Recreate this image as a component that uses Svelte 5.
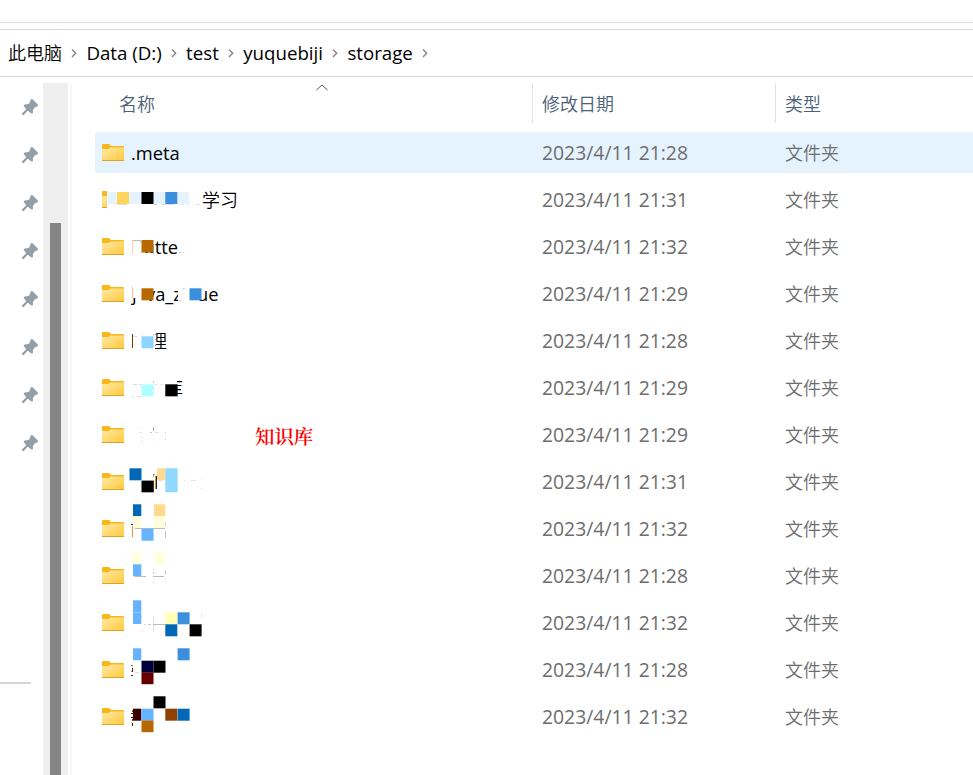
<script lang="ts">
  type Tile = [x: number, y: number, w: number, h: number, color: string];
  type Fragment = { x: number; text: string; cjk?: boolean };

  interface Row {
    label?: string;
    indent?: number;
    date: string;
    note?: string;
    fragments?: Fragment[];
    tiles?: Tile[];
  }

  const crumbs = ['Data (D:)', 'test', 'yuquebiji', 'storage'];
  const pins = Array.from({ length: 8 }, (_, i) => i);

  const sky = '#66b3ff';
  const blue = '#3c8fdd';
  const deep = '#0068b7';
  const cream = '#ffffdc';
  const peach = '#ffd98c';
  const faint = '#c5c9cd';

  // tiles are [x, y, width, height, color], measured from the row's top left corner
  const rows: Row[] = [
    { label: '.meta', date: '2023/4/11 21:28' },
    {
      label: '学习',
      indent: 107,
      date: '2023/4/11 21:31',
      tiles: [
        [12, 10, 19, 22, '#fff'],
        [12, 13, 82, 12, '#e5f3ff'],
        [22, 13, 12, 12, '#ffd45c'],
        [46.5, 13, 12, 12, '#000'],
        [70.3, 13, 12, 12, blue],
        [22, 25, 10, 1, '#ddd'],
        [59, 25, 3, 1, faint],
        [66, 25, 12, 1, '#ddd'],
        [86, 25, 2, 1, '#ddd'],
        [93, 25, 1, 1, '#ddd'],
        [101, 25, 3, 1, '#ddd']
      ]
    },
    {
      date: '2023/4/11 21:32',
      fragments: [{ x: 48.5, text: 'utte' }],
      tiles: [
        [83.5, 12, 6, 17, '#fff'],
        [37, 14, 1, 14, '#ffd4a0'],
        [38, 14, 8, 1, '#bbb'],
        [46.5, 14, 12, 12.5, '#b86800'],
        [46, 27, 12, 3, '#fff'],
        [45, 14, 1, 3, faint],
        [45, 26, 1, 1, faint],
        [84, 26, 2, 1, faint],
        [88, 26, 1, 1, faint]
      ]
    },
    {
      date: '2023/4/11 21:29',
      fragments: [
        { x: 37, text: 'j' },
        { x: 51, text: 'va_z' },
        { x: 102, text: 'ue' }
      ],
      tiles: [
        [36, 12, 6, 13, '#fff'],
        [37, 14, 1, 11, '#f4c08c'],
        [46.5, 15.3, 12, 12, '#b86800'],
        [83, 15, 10, 15, '#fff'],
        [88, 15, 2, 1, faint],
        [84, 27, 2, 1, faint],
        [94.5, 15.3, 12, 12, blue],
        [94, 28, 12, 5, '#fff']
      ]
    },
    {
      date: '2023/4/11 21:28',
      fragments: [{ x: 54, text: '理', cjk: true }],
      tiles: [
        [53, 12, 7, 20, '#fff'],
        [37, 14, 1, 14, '#7a3500'],
        [38, 16, 4, 1, '#ddd'],
        [46.5, 14, 1, 1, faint],
        [58, 14, 1, 2, faint],
        [46.5, 16.3, 12, 12, '#8dd5ff']
      ]
    },
    {
      date: '2023/4/11 21:29',
      fragments: [{ x: 70, text: '库', cjk: true }],
      tiles: [
        [69, 12, 13, 19, '#fff'],
        [38, 17, 4, 1, '#ddd'],
        [44, 17, 3, 1, '#ddd'],
        [60, 17, 2, 1, '#ddd'],
        [66, 17, 2, 1, '#ddd'],
        [37, 29, 2, 1, '#ddd'],
        [42, 29, 4, 1, '#ddd'],
        [58, 14, 1, 2, faint],
        [58, 20, 1, 2, faint],
        [46.5, 17.3, 12, 12, '#b0ffff'],
        [70.3, 17.3, 12.3, 12, '#000']
      ]
    },
    {
      date: '2023/4/11 21:29',
      note: '知识库',
      tiles: [
        [44, 18, 3, 1, '#ddd'],
        [46, 14, 1, 1, '#ddd'],
        [55, 18, 2, 1, faint],
        [58, 13, 1, 4, '#a5adcf'],
        [60, 18, 3, 1, '#ddd'],
        [46, 23, 1, 1, '#ddd'],
        [46, 27, 1, 2, '#c8eee5'],
        [58, 20, 1, 10, '#effcff'],
        [70, 18, 1, 2, '#ddd'],
        [70, 25, 1, 1, '#ddd']
      ]
    },
    {
      date: '2023/4/11 21:31',
      tiles: [
        [34.5, 7.3, 12, 12, deep],
        [46.5, 19.6, 12.3, 11.7, '#000'],
        [62, 7.3, 8.3, 12, peach],
        [70.3, 7.3, 12.3, 24, '#90d8ff'],
        [58, 13, 2, 1, '#888'],
        [58, 14, 1, 2, '#99a'],
        [60, 15, 1, 13, '#e09030'],
        [61, 15, 1, 13, '#10254a'],
        [64, 19, 3, 1, '#ddd'],
        [89, 19, 1, 1, '#ddd'],
        [96, 19, 2, 1, '#ddd'],
        [99, 19, 2, 1, '#ddd'],
        [106, 17, 1, 1, '#ddd'],
        [106, 27, 1, 1, '#ddd']
      ]
    },
    {
      date: '2023/4/11 21:32',
      tiles: [
        [38, -3.7, 8.3, 12, deep],
        [38, 8.3, 8.3, 12, cream],
        [59, -3.7, 11.3, 12, peach],
        [59, 8.3, 11.3, 12, cream],
        [36, 16, 2, 1, '#222'],
        [37, 18, 1, 11, '#e09648'],
        [40, 20, 30, 1, '#bbb'],
        [46.5, 20.7, 12, 12, sky],
        [58, 25, 1, 4, faint],
        [70, 14, 1, 5, '#ddd5ee'],
        [70, 23, 1, 7, '#c5b8d8']
      ]
    },
    {
      date: '2023/4/11 21:28',
      tiles: [
        [38, -2.7, 8.3, 12, cream],
        [58.7, -2.7, 11.6, 12, cream],
        [38, 9.3, 8.3, 12, sky],
        [40, 21, 11, 1, '#bbb'],
        [58, 21, 11, 1, '#bbb'],
        [58, 14, 1, 1, faint],
        [58, 17, 1, 2, faint],
        [46, 27, 1, 1, faint],
        [58, 27, 1, 1, faint],
        [70, 16, 1, 3, '#c5b8d8'],
        [70, 24, 1, 4, '#d9f1ff']
      ]
    },
    {
      date: '2023/4/11 21:32',
      tiles: [
        [38, -1.7, 8.3, 11.7, sky],
        [38, 10.3, 8.3, 11.7, sky],
        [58, 14, 1, 16, '#cfe4fb'],
        [49, 22, 2, 1, '#ddd'],
        [53, 22, 3, 1, faint],
        [58, 22, 12, 1, '#bbb'],
        [46, 14, 1, 1, faint],
        [46, 28, 1, 1, faint],
        [70.3, 10.3, 12, 12, '#ffffb8'],
        [82.6, 10.3, 12, 12, blue],
        [70.3, 22.3, 12, 12, deep],
        [94.6, 22.3, 12, 12, '#000'],
        [106, 11, 1, 5, '#e6e6e6']
      ]
    },
    {
      date: '2023/4/11 21:28',
      tiles: [
        [38, -0.7, 8.3, 12, sky],
        [82.6, -0.7, 12, 12, blue],
        [46.5, 11.7, 12, 12, '#00003a'],
        [58.5, 11.7, 12, 12, '#000'],
        [46.5, 23.5, 12, 11.7, '#660000'],
        [36, 16, 2, 1, '#a06020'],
        [37, 19, 1, 4, '#5a2000'],
        [36, 22, 1, 1, '#d09030'],
        [36, 26, 2, 1, '#40200a'],
        [40, 23, 4, 1, '#ddd']
      ]
    },
    {
      date: '2023/4/11 21:32',
      tiles: [
        [58.5, 0.3, 12, 12, '#000'],
        [38, 12.7, 8.3, 12, '#3a0000'],
        [46.5, 12.7, 12, 12, sky],
        [70.3, 12.7, 12, 12, '#904000'],
        [82.6, 12.7, 12, 12, deep],
        [46.5, 24.5, 12, 11.7, '#b86800'],
        [37, 14, 1, 2, '#a06020'],
        [36, 17, 2, 1, '#402000'],
        [36, 21, 2, 1, '#000'],
        [37, 23, 1, 2, '#703500'],
        [36, 26, 1, 1, '#e0a030'],
        [37, 27, 1, 3, '#40200a']
      ]
    }
  ];
</script>

{#snippet chevron()}
  <svg class="chevron" width="6" height="10" viewBox="0 0 6 10">
    <path d="M1 1.500 4.700 5.200 1 8.900" fill="none" stroke="#858585" stroke-width="1.4" />
  </svg>
{/snippet}

<div class="explorer">
  <div class="toolbar"></div>
  <nav class="address">
    <span class="cjk">此电脑</span>
    {#each crumbs as crumb}
      {@render chevron()}
      <span>{crumb}</span>
    {/each}
    {@render chevron()}
  </nav>

  <div class="body">
    <aside class="quick">
      {#each pins as pin (pin)}
        <div class="pin">
          <svg width="16" height="16" viewBox="0 0 16 16">
            <path
              d="M8.800.2h1.700l5.300 5.200v1.700l-3 1.500-1.500 1.600-.5 4-1.200.6-3.300-2.900-.9.200-3.600 3.800H.1v-1.700l3.700-3.500.1-1-2.300-2.700.5-1.300 4.300-.6 1.200-1.400z"
              fill="#94a0a7"
            />
          </svg>
        </div>
      {/each}
      <div class="divider"></div>
    </aside>
    <div class="track"><div class="thumb"></div></div>
    <div class="splitter"></div>

    <main>
      <div class="grid head">
        <div class="name-head">
          名称
          <svg class="sort" width="12" height="7" viewBox="0 0 12 7">
            <path d="M.5 6 6 1l5.500 5" fill="none" stroke="#555" />
          </svg>
        </div>
        <div class="cell">修改日期</div>
        <div class="cell">类型</div>
      </div>

      {#each rows as row, i}
        <div class="grid row" class:selected={i === 0}>
          <div class="name">
            <svg class="folder" width="22" height="18" viewBox="0 0 22 18">
              <path d="M0 1Q0 0 1 0h5.500q1 0 1.500.7L9 2h12q1 0 1 1v4H0z" fill="#f8b719" />
              <path d="M0 5h6.500l2-1.500H22V16q0 1-1 1H1q-1 0-1-1z" fill="url(#folder-face)" />
              <path d="M0 16.500h22" stroke="#dca22b" />
            </svg>
            {#if row.label}
              <span class="label" class:cjk={row.indent} style:margin-left="{(row.indent ?? 36) - 29}px">
                {row.label}
              </span>
            {/if}
            {#if row.note}
              <span class="note">{row.note}</span>
            {/if}
            {#if row.tiles}
              <svg class="mosaic" width="240" height="41">
                {#each row.fragments ?? [] as part}
                  <text x={part.x} y="28" class:cjk={part.cjk}>{part.text}</text>
                {/each}
                {#each row.tiles as [x, y, w, h, color]}
                  <rect {x} {y} width={w} height={h} fill={color} />
                {/each}
              </svg>
            {/if}
          </div>
          <div class="date">{row.date}</div>
          <div class="type">文件夹</div>
        </div>
      {/each}
    </main>
  </div>

  <svg class="defs" width="0" height="0">
    <linearGradient id="folder-face" x1="0" y1="0" x2="1" y2="1">
      <stop offset="0" stop-color="#ffe9a9" />
      <stop offset="1" stop-color="#ffc938" />
    </linearGradient>
  </svg>
</div>

<style>
  :global(body) {
    margin: 0;
    background: #fff;
  }

  .explorer {
    width: 973px;
    height: 775px;
    overflow: hidden;
    position: relative;
    display: flex;
    flex-direction: column;
    font-family: 'Open Sans', 'Noto Sans CJK SC', sans-serif;
    font-size: 18.3px;
    color: #000;
    white-space: nowrap;
  }

  .cjk {
    font-family: 'Noto Sans CJK SC', sans-serif;
    font-size: 18px;
    font-weight: 350;
  }

  .toolbar {
    box-sizing: border-box;
    height: 23px;
    flex: none;
    border-bottom: 1px solid #d6dee2;
  }

  .address {
    box-sizing: border-box;
    height: 48px;
    flex: none;
    margin-top: 6px;
    padding: 0 0 2px 8px;
    display: flex;
    align-items: center;
    gap: 9.2px;
    border-top: 1px solid #d6dadb;
    border-bottom: 1px solid #d6dadb;
    font-size: 18.7px;
  }

  .chevron {
    flex: none;
    margin-top: 1px;
  }

  .body {
    flex: 1;
    min-height: 0;
    padding-top: 6px;
    display: flex;
  }

  .quick {
    width: 43px;
    flex: none;
  }

  .pin {
    height: 48px;
    display: flex;
    align-items: center;
    justify-content: flex-end;
    padding-right: 5px;
    box-sizing: border-box;
  }

  .divider {
    width: 31px;
    height: 2px;
    margin-top: 215px;
    background: #d5d5d5;
  }

  .track {
    width: 25px;
    flex: none;
    padding: 140px 7px 0;
    box-sizing: border-box;
    background: #efefef;
  }

  .thumb {
    width: 11px;
    height: 100%;
    background: #858585;
  }

  .splitter {
    width: 2px;
    margin-left: 2px;
    flex: none;
    background: #f7f7f7;
  }

  main {
    flex: 1;
    min-width: 0;
    padding-left: 23px;
  }

  .grid {
    display: grid;
    grid-template-columns: 437px 243px 1fr;
  }

  .head {
    height: 40px;
    margin-bottom: 9px;
    font-family: 'Noto Sans CJK SC', sans-serif;
    font-size: 18px;
    font-weight: 350;
    line-height: 40px;
    color: #4c607a;
  }

  .name-head {
    position: relative;
    padding-left: 24px;
  }

  .sort {
    position: absolute;
    left: 220.5px;
    top: 1px;
  }

  .cell {
    padding-left: 9px;
    border-left: 1px solid #e3e3e3;
  }

  .row {
    height: 41px;
    margin-bottom: 6px;
    align-items: center;
    border-radius: 3px 0 0 3px;
    line-height: 41px;
  }

  .selected {
    background: #e5f3ff;
  }

  .name {
    position: relative;
    height: 41px;
    padding-left: 7px;
    display: flex;
    align-items: center;
  }

  .folder {
    flex: none;
  }

  .note {
    margin: 3px 0 0 131px;
    font-family: 'Noto Serif CJK SC', 'Noto Sans CJK SC', serif;
    font-size: 19.4px;
    font-weight: 600;
    color: #f00;
  }

  .mosaic {
    position: absolute;
    left: 0;
    top: 0;
    overflow: visible;
  }

  .date {
    padding-left: 10px;
    font-size: 19.35px;
    color: #6d6d6d;
  }

  .type {
    padding-left: 10px;
    font-family: 'Noto Sans CJK SC', sans-serif;
    font-size: 18px;
    font-weight: 350;
    color: #6d6d6d;
  }

  .defs {
    position: absolute;
  }
</style>
